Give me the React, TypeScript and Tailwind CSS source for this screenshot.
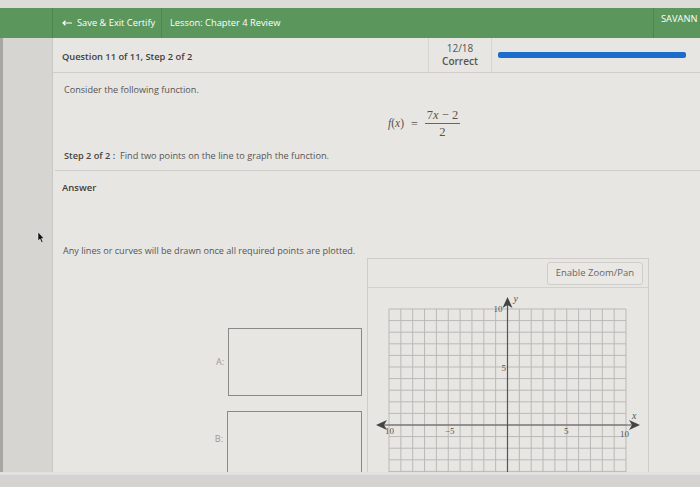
import React from "react";

const ox = 139.5;
const oy = 137;
const ux = 11.85;
const uy = 11.6;
const steps = Array.from({ length: 21 }, (_, i) => i - 10);

function Graph() {
  return (
    <svg width="281" height="185" className="block">
      {steps.map((i) => (
        <line key={"v" + i} x1={ox + i * ux} y1={oy - 10 * uy} x2={ox + i * ux} y2={185} stroke="#b9b9b7" strokeWidth="1" />
      ))}
      {steps.map((j) => (
        <line key={"h" + j} x1={ox - 10 * ux} y1={oy - j * uy} x2={ox + 10 * ux} y2={oy - j * uy} stroke="#b9b9b7" strokeWidth="1" />
      ))}
      {/* axes */}
      <line x1={12} y1={oy} x2={268} y2={oy} stroke="#555" strokeWidth="1.2" />
      <line x1={ox} y1={14} x2={ox} y2={185} stroke="#555" strokeWidth="1.2" />
      <polygon points={`${8},${oy} ${19},${oy - 5} ${16},${oy} ${19},${oy + 5}`} fill="#444" />
      <polygon points={`${272},${oy} ${261},${oy - 5} ${264},${oy} ${261},${oy + 5}`} fill="#444" />
      <polygon points={`${ox},${9} ${ox - 5},${20} ${ox},${17} ${ox + 5},${20}`} fill="#444" />
      <g fontFamily="'Liberation Serif', serif" fontSize="9" fill="#555">
        <text x={ox - 14} y={24}>10</text>
        <text x={ox - 6} y={83}>5</text>
        <text x={ox + 6} y={14} fontStyle="italic" fontSize="10">y</text>
        <text x={17} y={oy + 9}>10</text>
        <text x={77} y={oy + 9}>−5</text>
        <text x={196} y={oy + 9}>5</text>
        <text x={252} y={oy + 12}>10</text>
        <text x={264} y={oy - 6} fontStyle="italic" fontSize="10">x</text>
      </g>
    </svg>
  );
}

export default function App() {
  return (
    <div
      className="relative w-[700px] h-[487px] overflow-hidden flex flex-col bg-[#e8e6e2] text-[#4a4a4a]"
      style={{ fontFamily: "'Open Sans', 'Noto Sans', sans-serif" }}
    >
      {/* top strip */}
      <div className="h-[8px] bg-[#dedcd9]" />

      {/* green header */}
      <div className="h-[30px] bg-[#5b975d] flex items-stretch text-white text-[9.3px]">
        <div className="w-[53px] border-r border-[#4c8650]" />
        <div className="w-[109px] flex items-center gap-[5px] pl-[9px] border-r border-[#4c8650]">
          <svg width="10" height="6" viewBox="0 0 10 6">
            <path d="M10 3 H1.5 M3.5 0.8 L1 3 L3.5 5.2" fill="none" stroke="#fff" strokeWidth="1.2" />
          </svg>
          <span>Save &amp; Exit Certify</span>
        </div>
        <div className="flex items-center pl-[8px]">Lesson: Chapter 4 Review</div>
        <div className="flex-1" />
        <div className="w-[47px] border-l border-[#4c8650] flex items-start pt-[4px] pl-[7px] whitespace-nowrap">
          SAVANN
        </div>
      </div>

      {/* body */}
      <div className="flex-1 flex min-h-0">
        <div className="w-[53px] bg-[#d7d5d1] border-r border-[#cac8c4] border-l-[3px] border-l-[#a9a7a4]" />

        <div className="flex-1 flex flex-col min-w-0">
          {/* question bar */}
          <div className="h-[35px] flex items-stretch border-b border-[#d0cecb] shrink-0">
            <div className="w-[375px] flex items-center pl-[9px] pt-[4px] text-[9.3px] font-semibold text-[#404040]">
              Question 11 of 11, Step 2 of 2
            </div>
            <div className="w-[64px] border-x border-[#d6d4d0] flex flex-col items-center justify-center text-[10px] leading-[13px] text-[#555]">
              <span>12/18</span>
              <span className="font-semibold">Correct</span>
            </div>
            <div className="flex-1 flex items-center pl-[6px] pr-[14px]">
              <div className="h-[6px] w-full rounded-[2px] bg-[#1b6ccb]" />
            </div>
          </div>

          {/* question text */}
          <div className="pl-[11px] pt-[11px] text-[9.1px] leading-[12px] text-[#555]">Consider the following function.</div>

          <div className="pl-[335px] h-[36px] mt-[9px] flex items-center gap-[7px] text-[#555]" style={{ fontFamily: "'Liberation Serif', serif" }}>
            <span className="text-[11.5px] pt-[2px]">
              <i>f</i>(<i>x</i>)
            </span>
            <span className="text-[12px] pt-[1px]">=</span>
            <span className="flex flex-col items-center text-[12.5px] leading-[14px]">
              <span className="px-[2px] pb-[1px]">
                7<i>x</i> − 2
              </span>
              <span className="w-full border-t border-[#666] pt-[1px] text-center">2</span>
            </span>
          </div>

          <div className="pl-[11px] mt-[9px] text-[9.2px] leading-[12px] text-[#555]">
            <span className="font-semibold text-[#444]">Step 2 of 2 :</span>&nbsp; Find two points on the line to graph the function.
          </div>

          <div className="mt-[8px] border-b border-[#d0cecb] ml-[2px]" />

          <div className="pl-[9px] mt-[11px] text-[9.5px] leading-[12px] font-semibold text-[#3e3e3e]">Answer</div>

          <div className="pl-[10px] mt-[51px] text-[9.1px] leading-[12px] text-[#555]">
            Any lines or curves will be drawn once all required points are plotted.
          </div>

          {/* answer area */}
          <div className="flex items-start flex-1 min-h-0 mt-[1px]">
            <div className="w-[314px] flex flex-col items-end pr-[5px] pt-[70px] gap-[15px]">
              <div className="flex items-center gap-[4px]">
                <span className="text-[9px] text-[#999]">A:</span>
                <div className="w-[134px] h-[68px] border-[1.5px] border-[#8a8987]" />
              </div>
              <div className="flex items-center gap-[4px]">
                <span className="text-[9px] text-[#999] -mt-[12px]">B:</span>
                <div className="w-[135px] h-[68px] border-[1.5px] border-[#8a8987]" />
              </div>
            </div>

            <div className="w-[282px] h-full flex flex-col border border-[#cfcdc9] border-b-0">
              <div className="h-[29px] flex items-center justify-end pr-[5px] border-b border-[#d3d1cd] shrink-0">
                <div className="h-[23px] px-[8px] flex items-center border border-[#cfcdc9] rounded-[3px] text-[9.5px] text-[#666] bg-[#eae8e4]">
                  Enable Zoom/Pan
                </div>
              </div>
              <Graph />
            </div>
          </div>
        </div>
      </div>

      {/* bottom strip */}
      <div className="h-[15px] bg-[#d4d3d1] border-t-[3px] border-[#e2e1df] shrink-0" />

      {/* mouse cursor */}
      <svg className="absolute left-[37px] top-[232px]" width="8" height="11" viewBox="0 0 8 11">
        <path d="M1 0 L1 9 L3 7 L4.5 10.5 L6 10 L4.5 6.5 L7 6.5 Z" fill="#111" stroke="#fff" strokeWidth="0.5" />
      </svg>
    </div>
  );
}
